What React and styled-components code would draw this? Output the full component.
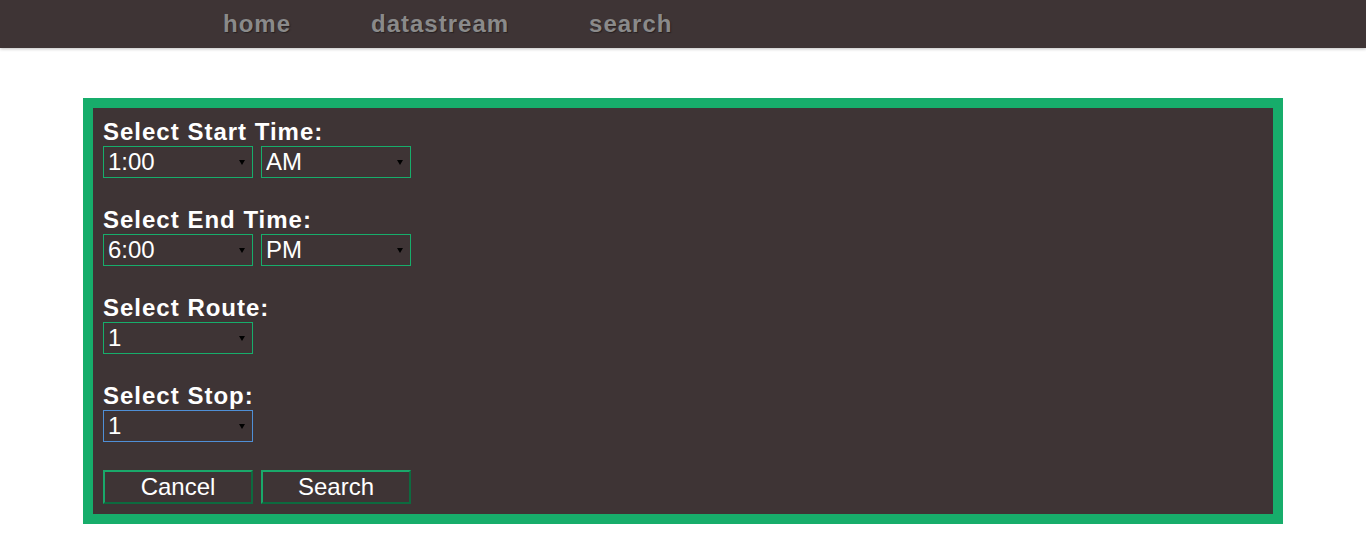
import styled, { createGlobalStyle } from 'styled-components'

const GlobalStyle = createGlobalStyle`
	body {
		margin: 0;
		background: #ffffff;
		font-family: 'Liberation Sans', Arial, sans-serif;
	}
`

const NavBar = styled.nav`
	display: flex;
	align-items: center;
	height: 48px;
	padding: 0 0 1px 183px;
	box-sizing: border-box;
	background: #3e3435;
	box-shadow: 0 1px 3px rgba(0, 0, 0, 0.25);
`

const NavLink = styled.a`
	padding: 0 40px;
	font-size: 24px;
	font-weight: 700;
	letter-spacing: 1px;
	color: #8a8a8a;
	text-shadow: 1px 1px 1px #272122;
	text-decoration: none;
`

const FormBox = styled.form`
	width: 1200px;
	box-sizing: border-box;
	margin: 50px auto 0;
	padding: 10px;
	border: 10px solid #17ad6b;
	background: #3e3435;
	display: flex;
	flex-direction: column;
	gap: 28px;
`

const Group = styled.div`
	display: flex;
	flex-direction: column;
`

const Label = styled.label`
	font-size: 24px;
	font-weight: 700;
	letter-spacing: 1px;
	line-height: 28px;
	color: #ffffff;
`

const Row = styled.div`
	display: flex;
	gap: 8px;
`

const SelectWrap = styled.div`
	position: relative;
	width: 150px;
	height: 32px;
`

const Select = styled.select`
	appearance: none;
	width: 100%;
	height: 100%;
	box-sizing: border-box;
	padding: 0 0 1px 4px;
	background: transparent;
	border: 1px solid ${({ focused }) => (focused ? '#4f8fd6' : '#17ad6b')};
	border-radius: 0;
	color: #ffffff;
	font-family: 'Liberation Sans', Arial, sans-serif;
	font-size: 24px;
	outline: none;
`

const Arrow = styled.span`
	position: absolute;
	right: 8px;
	top: 14px;
	width: 0;
	height: 0;
	border-left: 3px solid transparent;
	border-right: 3px solid transparent;
	border-top: 5px solid #000000;
	pointer-events: none;
`

const Button = styled.button`
	width: 150px;
	height: 34px;
	box-sizing: border-box;
	padding: 0;
	background: #3e3435;
	border: 2px solid;
	border-color: #1aa86a #0d6a3f #0d6a3f #1aa86a;
	color: #ffffff;
	font-family: 'Liberation Sans', Arial, sans-serif;
	font-size: 24px;
	line-height: 28px;
`

const Dropdown = ({ value, options, focused }) => (
	<SelectWrap>
		<Select defaultValue={value} focused={focused}>
			{options.map((o) => (
				<option key={o}>{o}</option>
			))}
		</Select>
		<Arrow />
	</SelectWrap>
)

const hours = ['1:00', '2:00', '3:00', '4:00', '5:00', '6:00', '7:00', '8:00', '9:00', '10:00', '11:00', '12:00']
const ampm = ['AM', 'PM']
const nums = ['1', '2', '3', '4', '5']

const App = () => {
	return (
		<>
			<GlobalStyle />
			<NavBar>
				<NavLink href='#'>home</NavLink>
				<NavLink href='#'>datastream</NavLink>
				<NavLink href='#'>search</NavLink>
			</NavBar>
			<FormBox onSubmit={(e) => e.preventDefault()}>
				<Group>
					<Label>Select Start Time:</Label>
					<Row>
						<Dropdown value='1:00' options={hours} />
						<Dropdown value='AM' options={ampm} />
					</Row>
				</Group>
				<Group>
					<Label>Select End Time:</Label>
					<Row>
						<Dropdown value='6:00' options={hours} />
						<Dropdown value='PM' options={ampm} />
					</Row>
				</Group>
				<Group>
					<Label>Select Route:</Label>
					<Row>
						<Dropdown value='1' options={nums} />
					</Row>
				</Group>
				<Group>
					<Label>Select Stop:</Label>
					<Row>
						<Dropdown value='1' options={nums} focused />
					</Row>
				</Group>
				<Row>
					<Button type='button'>Cancel</Button>
					<Button type='submit'>Search</Button>
				</Row>
			</FormBox>
		</>
	)
}

export default App
